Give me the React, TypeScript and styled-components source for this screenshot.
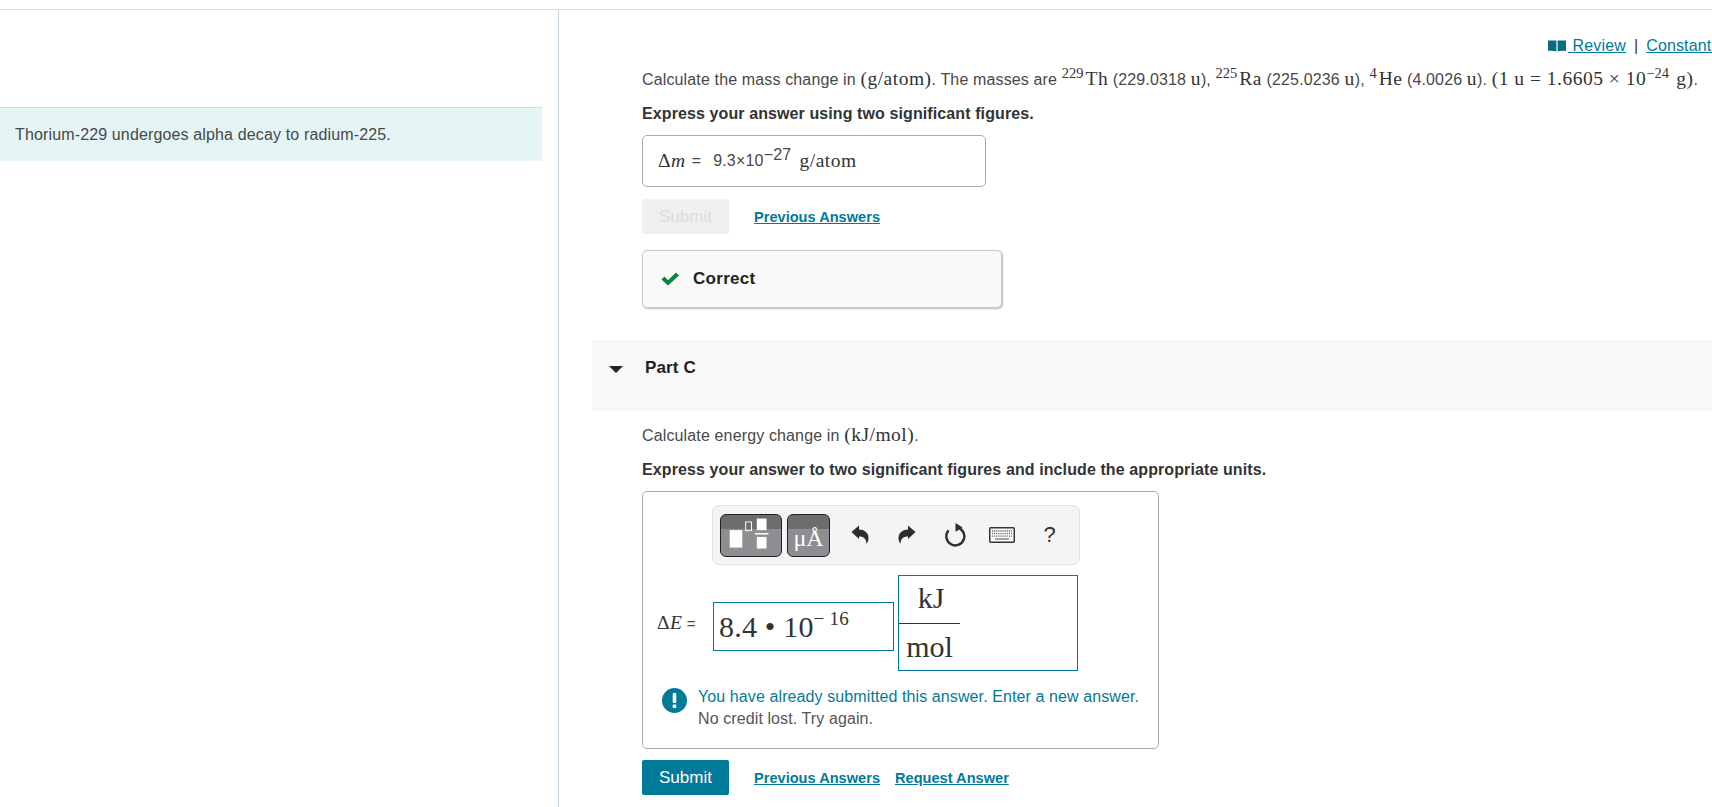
import React from "react";
import styled, { createGlobalStyle } from "styled-components";

const GlobalStyle = createGlobalStyle`
  html, body {
    margin: 0;
    padding: 0;
    background: #fff;
    overflow: hidden;
  }
  body {
    font-family: "Liberation Sans", Arial, sans-serif;
    font-size: 16px;
    line-height: 22px;
    letter-spacing: 0.14px;
    color: #484848;
  }
`;

const BookIcon = () => (
  <svg width="18" height="12" viewBox="0 0 18 12">
    <path d="M0 0.5 L8.4 0.5 L8.4 11.5 C6 10.6 3 10.6 0 11 Z M9.6 0.5 L18 0.5 L18 11 C15 10.6 12 10.6 9.6 11.5 Z" fill="#0a6a80" />
  </svg>
);

const CheckIcon = () => (
  <svg width="19" height="14" viewBox="0 0 19 14">
    <path d="M0.5 7.5 L3.4 4.6 L7 8.2 L15 0.5 L18 3.4 L7 13.6 Z" fill="#0b8043" />
  </svg>
);

const TemplateIcon = () => (
  <svg width="62" height="44" viewBox="0 0 62 44">
    <rect x="9" y="17" width="13" height="18" fill="#fff" />
    <rect x="25.5" y="8.5" width="6" height="9" fill="none" stroke="#fff" strokeWidth="1" />
    <rect x="37" y="5" width="10" height="12" fill="#fff" />
    <rect x="35" y="20" width="14" height="1.5" fill="#fff" />
    <rect x="37" y="24" width="10" height="12" fill="#fff" />
  </svg>
);

const ReplyIcon = ({ flip }: { flip?: boolean }) => (
  <svg width="18" height="22" viewBox="0 0 18 22" style={flip ? { transform: "scaleX(-1)" } : undefined}>
    <path d="M0.5 8 L8 1.5 L8 5.5 C13 5.5 17.5 8.5 17.5 14 C17.5 16.5 16.5 18.5 15.5 20 C15.5 15 13 12.5 8 12.5 L8 15 Z" fill="#2d2d2d" />
  </svg>
);

const ResetIcon = () => (
  <svg width="22" height="24" viewBox="0 0 22 24">
    <path d="M12 4.4 A9 9 0 1 1 4.6 7.4" fill="none" stroke="#2d2d2d" strokeWidth="2.4" />
    <path d="M11.5 0 L18.5 4.4 L11.5 8.8 Z" fill="#2d2d2d" />
  </svg>
);

const KeyboardIcon = () => (
  <svg width="26" height="16" viewBox="0 0 26 16">
    <rect x="0.75" y="0.75" width="24.5" height="14.5" rx="1" fill="#fff" stroke="#333" strokeWidth="1.5" />
    <path d="M3 4 H23 M3 6.6 H23 M3 9.2 H23" stroke="#666" strokeWidth="1.3" strokeDasharray="1.2 0.9" />
    <path d="M6 12 H20" stroke="#666" strokeWidth="1.2" />
  </svg>
);

const InfoIcon = () => (
  <svg width="25" height="25" viewBox="0 0 25 25">
    <circle cx="12.5" cy="12.5" r="12.5" fill="#007a99" />
    <rect x="10.7" y="5" width="3.6" height="10" rx="1" fill="#fff" />
    <rect x="10.7" y="16.6" width="3.6" height="3.4" rx="0.8" fill="#fff" />
  </svg>
);

const Page = styled.div`
  display: grid;
  grid-template-columns: 558px 1fr;
  width: 1712px;
  height: 797px;
  margin-top: 9px;
  border-top: 1px solid #dfdfdf;
  overflow: hidden;
`;

const LeftColumn = styled.aside`
  padding-top: 97px;
`;

const Intro = styled.div`
  width: 542px;
  height: 54px;
  box-sizing: border-box;
  padding-left: 15px;
  display: flex;
  align-items: center;
  background: #e5f5f6;
  border-top: 1px solid #d9d9d9;
`;

const RightColumn = styled.main`
  border-left: 1px solid #c4d3de;
  padding-top: 25px;
  min-width: 0;
  overflow: hidden;
`;

const TopLinks = styled.div`
  display: flex;
  align-items: center;
  gap: 8px;
  height: 22px;
  padding-left: 989px;
  white-space: nowrap;
`;

const BookSlot = styled.span`
  display: flex;
  margin-right: -6px;
`;

const TextLink = styled.a`
  color: #007a99;
  text-decoration: underline;
`;

const Divider = styled.span`
  color: #414042;
`;

const Content = styled.section`
  padding-left: 83px;
`;

const Prompt = styled.p<{ $top: number }>`
  margin: ${p => p.$top}px 0 0;
  white-space: nowrap;
  height: 22px;
`;

const Instruction = styled.p<{ $top: number }>`
  margin: ${p => p.$top}px 0 0;
  font-weight: 700;
  font-size: 16px;
  letter-spacing: 0.1px;
  color: #333;
  white-space: nowrap;
`;

const Math = styled.span`
  font-family: "Liberation Serif", "DejaVu Serif", serif;
  font-size: 19.5px;
  letter-spacing: 0.5px;
  color: #333;
`;

const Italic = styled.i`
  font-family: "Liberation Serif", serif;
`;

const Sup = styled.sup`
  font-size: 14.5px;
  letter-spacing: 0;
  line-height: 0;
  vertical-align: 7px;
  margin-right: 2px;
`;

const AnswerBox = styled.div`
  margin-top: 10px;
  width: 344px;
  height: 52px;
  box-sizing: border-box;
  border: 1px solid #aaa;
  border-radius: 5px;
  padding-left: 15px;
  display: flex;
  align-items: center;
  gap: 6px;
  white-space: nowrap;
`;

const AnswerValue = styled.span`
  font-size: 16px;
  letter-spacing: 0.2px;
  margin-left: 6px;
  margin-right: 2px;
`;

const ValueSup = styled.sup`
  font-size: 16px;
  line-height: 0;
  vertical-align: 6px;
`;

const Actions = styled.div<{ $top: number }>`
  margin-top: ${p => p.$top}px;
  display: flex;
  align-items: center;
  gap: 15px;
`;

const SubmitButton = styled.button<{ $disabled?: boolean }>`
  width: 87px;
  height: 35px;
  border: 0;
  border-radius: 2px;
  margin-right: 10px;
  padding: 0;
  font: inherit;
  font-size: 17px;
  color: ${p => (p.$disabled ? "#dcdcdc" : "#fff")};
  background: ${p => (p.$disabled ? "#f0f0f0" : "#007a99")};
`;

const ActionLink = styled.a`
  font-size: 14.6px;
  letter-spacing: 0;
  font-weight: 700;
  color: #007a99;
  text-decoration: underline;
`;

const Feedback = styled.div`
  margin-top: 16px;
  width: 360px;
  height: 58px;
  box-sizing: border-box;
  display: flex;
  align-items: center;
  gap: 13px;
  padding-left: 18px;
  background: #f9f9f9;
  border: 1px solid #c8c8c8;
  border-radius: 5px;
  box-shadow: 1px 1px 2px #bbb;
  font-size: 17px;
  letter-spacing: 0.3px;
  font-weight: 700;
  color: #222;
`;

const PartHeader = styled.div`
  margin-top: 32px;
  margin-left: 33px;
  height: 71px;
  display: flex;
  align-items: flex-start;
  padding: 17px 0 0 17px;
  box-sizing: border-box;
  background: #f8f8f8;
  font-size: 17px;
  font-weight: 700;
  color: #222;
`;

const Caret = styled.span`
  width: 0;
  height: 0;
  margin: 9px 22px 0 0;
  border-left: 7px solid transparent;
  border-right: 7px solid transparent;
  border-top: 7px solid #222;
`;

const Workspace = styled.div`
  margin-top: 10px;
  width: 517px;
  height: 258px;
  box-sizing: border-box;
  border: 1px solid #aaa;
  border-radius: 5px;
  padding: 13px 0 0 69px;
`;

const Toolbar = styled.div`
  width: 368px;
  height: 60px;
  box-sizing: border-box;
  background: #f4f4f4;
  border: 1px solid #e2e2e2;
  border-radius: 7px;
  display: flex;
  align-items: center;
  padding-left: 7px;
`;

const ToolGroup = styled.button<{ $width: number; $gap: number }>`
  width: ${p => p.$width}px;
  height: 43px;
  margin-right: ${p => p.$gap}px;
  padding: 0;
  flex: none;
  box-sizing: border-box;
  border: 1px solid #222;
  border-radius: 6px;
  background: linear-gradient(#6d6d6f 0 35%, #8e8e92 35% 100%);
  display: flex;
  align-items: center;
  justify-content: center;
  overflow: hidden;
`;

const UnitGlyph = styled.span`
  font-family: "Liberation Serif", serif;
  font-size: 24px;
  line-height: 1;
  margin-top: 5px;
  color: #fff;
`;

const ToolIcon = styled.span`
  width: 47.5px;
  flex: none;
  display: flex;
  align-items: center;
  justify-content: center;
  color: #2d2d2d;
`;

const HelpMark = styled(ToolIcon)`
  font-size: 22px;
  color: #333;
`;

const EntryRow = styled.div`
  margin: 10px 0 0 -55px;
  display: flex;
  align-items: center;
`;

const EntryLabel = styled.span`
  width: 56px;
  flex: none;
  white-space: nowrap;
  font-size: 15px;
`;

const EntryField = styled.div`
  width: 181px;
  height: 49px;
  margin: 7px 4px 0 0;
  flex: none;
  box-sizing: border-box;
  border: 1px solid #007a99;
  padding-left: 5px;
  display: flex;
  align-items: center;
  font-family: "Liberation Serif", serif;
  font-size: 30px;
  letter-spacing: 0.2px;
  color: #333;
  white-space: nowrap;
`;

const EntrySup = styled.sup`
  font-size: 19px;
  line-height: 0;
  vertical-align: 12px;
`;

const UnitField = styled.div`
  width: 180px;
  height: 96px;
  flex: none;
  box-sizing: border-box;
  border: 1px solid #007a99;
  font-family: "Liberation Serif", serif;
  font-size: 30px;
  letter-spacing: 0;
  color: #333;
`;

const Fraction = styled.div`
  width: 61px;
  display: flex;
  flex-direction: column;
  align-items: center;
`;

const Numerator = styled.span`
  height: 47px;
  line-height: 44px;
  width: 100%;
  box-sizing: content-box;
  text-align: center;
  text-indent: 3px;
  border-bottom: 1px solid #333;
`;

const Denominator = styled.span`
  line-height: 46px;
`;

const Message = styled.div`
  margin: 15px 0 0 -50px;
  display: flex;
  gap: 11px;
  font-size: 16px;
  letter-spacing: 0.1px;
  color: #555;
`;

const IconSlot = styled.span`
  margin-top: 2px;
  flex: none;
  display: flex;
`;

const MessageText = styled.div`
  white-space: nowrap;
`;

const MessageLead = styled.div`
  color: #007a99;
`;

export default function App() {
  return (
    <>
      <GlobalStyle />
      <Page>
        <LeftColumn>
          <Intro>Thorium-229 undergoes alpha decay to radium-225.</Intro>
        </LeftColumn>
        <RightColumn>
          <TopLinks>
            <BookSlot><BookIcon /></BookSlot>
            <TextLink>{"\u00a0"}Review</TextLink>
            <Divider>|</Divider>
            <TextLink>Constants</TextLink>
          </TopLinks>
          <Content>
            <Prompt $top={11}>
              Calculate the mass change in <Math>(g/atom)</Math>. The masses are{" "}
              <Math><Sup>229</Sup>Th</Math> (229.0318 <Math>u</Math>),{" "}
              <Math><Sup>225</Sup>Ra</Math> (225.0236 <Math>u</Math>),{" "}
              <Math><Sup>4</Sup>He</Math> (4.0026 <Math>u</Math>).{" "}
              <Math>(1 u = 1.6605 × 10<Sup>−24</Sup> g)</Math>.
            </Prompt>
            <Instruction $top={13}>Express your answer using two significant figures.</Instruction>
            <AnswerBox>
              <Math>Δ<Italic>m</Italic></Math>
              <span>=</span>
              <AnswerValue>9.3×10<ValueSup>−27</ValueSup></AnswerValue>
              <Math>g/atom</Math>
            </AnswerBox>
            <Actions $top={12}>
              <SubmitButton $disabled>Submit</SubmitButton>
              <ActionLink>Previous Answers</ActionLink>
            </Actions>
            <Feedback>
              <CheckIcon />
              Correct
            </Feedback>
          </Content>
          <PartHeader>
            <Caret />
            Part C
          </PartHeader>
          <Content>
            <Prompt $top={13}>
              Calculate energy change in <Math>(kJ/mol)</Math>.
            </Prompt>
            <Instruction $top={13}>
              Express your answer to two significant figures and include the appropriate units.
            </Instruction>
            <Workspace>
              <Toolbar>
                <ToolGroup $width={62} $gap={5}>
                  <TemplateIcon />
                </ToolGroup>
                <ToolGroup $width={43} $gap={6}>
                  <UnitGlyph>μÅ</UnitGlyph>
                </ToolGroup>
                <ToolIcon><ReplyIcon /></ToolIcon>
                <ToolIcon><ReplyIcon flip /></ToolIcon>
                <ToolIcon><ResetIcon /></ToolIcon>
                <ToolIcon><KeyboardIcon /></ToolIcon>
                <HelpMark>?</HelpMark>
              </Toolbar>
              <EntryRow>
                <EntryLabel>
                  <Math>Δ<Italic>E</Italic></Math> =
                </EntryLabel>
                <EntryField>
                  <span>8.4 • 10<EntrySup>− 16</EntrySup></span>
                </EntryField>
                <UnitField>
                  <Fraction>
                    <Numerator>kJ</Numerator>
                    <Denominator>mol</Denominator>
                  </Fraction>
                </UnitField>
              </EntryRow>
              <Message>
                <IconSlot><InfoIcon /></IconSlot>
                <MessageText>
                  <MessageLead>You have already submitted this answer. Enter a new answer.</MessageLead>
                  <div>No credit lost. Try again.</div>
                </MessageText>
              </Message>
            </Workspace>
            <Actions $top={11}>
              <SubmitButton>Submit</SubmitButton>
              <ActionLink>Previous Answers</ActionLink>
              <ActionLink>Request Answer</ActionLink>
            </Actions>
          </Content>
        </RightColumn>
      </Page>
    </>
  );
}
